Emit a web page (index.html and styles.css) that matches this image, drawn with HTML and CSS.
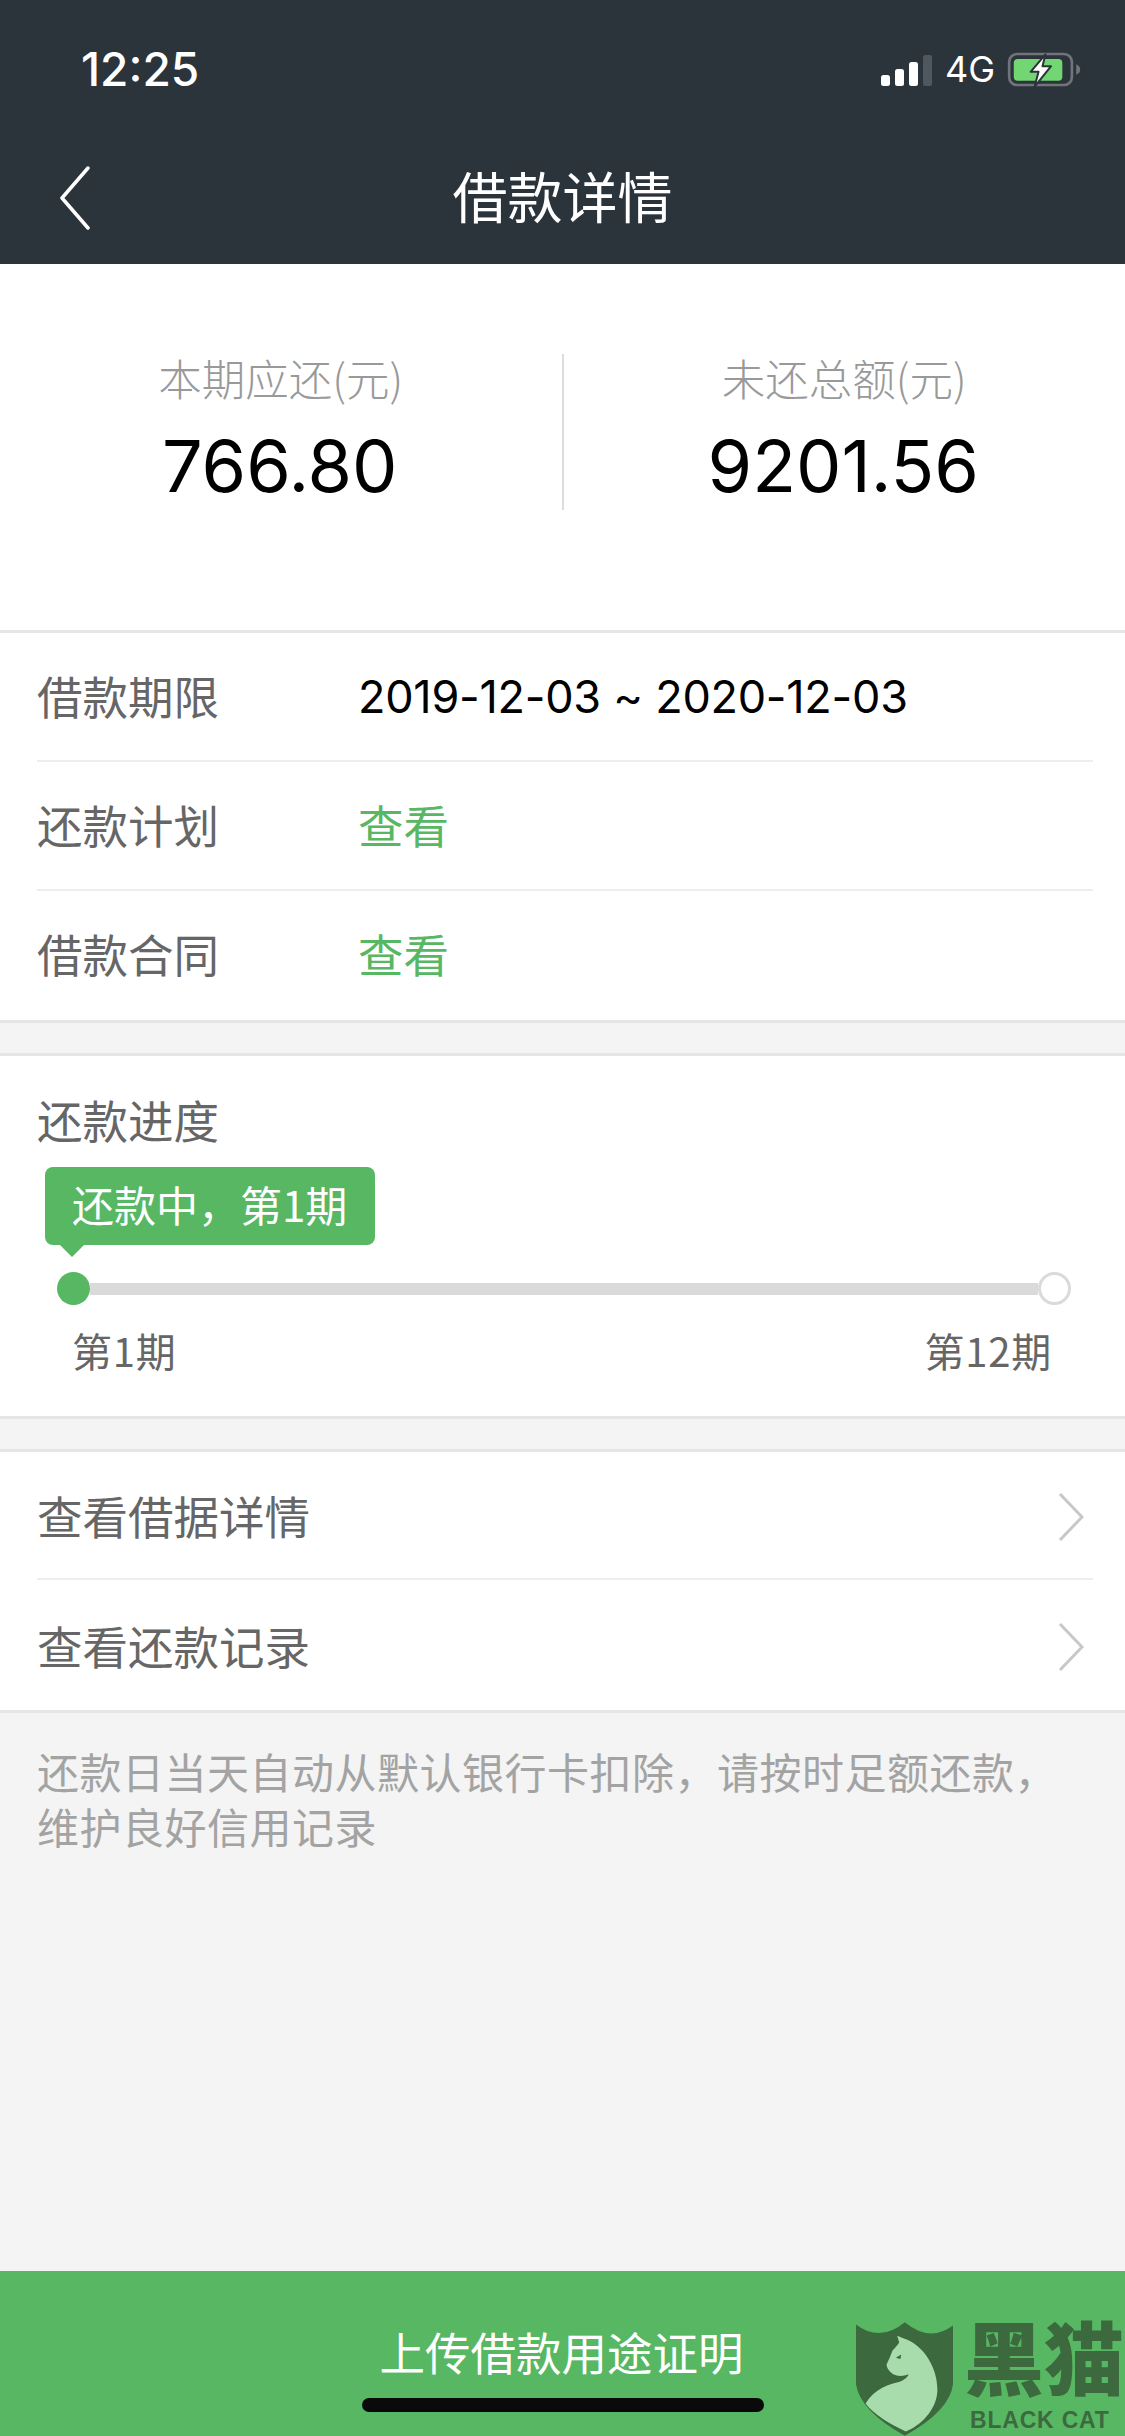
FILE: index.html
```html
<!DOCTYPE html>
<html lang="zh-CN">
<head>
<meta charset="utf-8">
<title>借款详情</title>
<link rel="stylesheet" href="styles.css">
</head>
<body>
<div class="app">
  <header class="header">
    <div class="status">
      <span class="time">12:25</span>
      <div class="status-right">
        <svg class="signal" viewBox="0 0 51 31" width="51" height="31">
          <rect x="0" y="20" width="9" height="11" rx="2.5" fill="#fff"/>
          <rect x="14" y="14" width="9" height="17" rx="2.5" fill="#fff"/>
          <rect x="28" y="7" width="9" height="24" rx="2.5" fill="#fff"/>
          <rect x="42" y="0" width="9" height="31" rx="2.5" fill="#50585f"/>
        </svg>
        <span class="net">4G</span>
        <svg class="battery" viewBox="620 60 230 112" width="77" height="37">
          <rect x="631" y="69" width="190" height="94" rx="24" fill="none" stroke="#6f757a" stroke-width="8"/>
          <rect x="645" y="84" width="147" height="66" rx="12" fill="#72d672"/>
          <path d="M834 100 Q846 105 846 116 Q846 127 834 132Z" fill="#6f757a"/>
          <path d="M741 70 L696 123 L720 123 L708 168 L758 106 L732 106Z" fill="#fff" stroke="#2b333b" stroke-width="6" stroke-linejoin="round"/>
        </svg>
      </div>
    </div>
    <nav class="nav">
      <svg class="back" viewBox="0 0 32 64" width="32" height="64">
        <path d="M29 2 L3 32 L29 62" fill="none" stroke="#fff" stroke-width="3.5" stroke-linecap="round" stroke-linejoin="round"/>
      </svg>
      <h1 class="title">借款详情</h1>
    </nav>
  </header>

  <section class="stats">
    <div class="stat">
      <div class="stat-label">本期应还(元)</div>
      <div class="stat-value">766.80</div>
    </div>
    <div class="stat-sep"></div>
    <div class="stat">
      <div class="stat-label">未还总额(元)</div>
      <div class="stat-value">9201.56</div>
    </div>
  </section>

  <section class="group group-info">
    <div class="row"><span class="row-label">借款期限</span><span class="row-date">2019-12-03 ~ 2020-12-03</span></div>
    <div class="row"><span class="row-label">还款计划</span><span class="row-link">查看</span></div>
    <div class="row row-last"><span class="row-label">借款合同</span><span class="row-link">查看</span></div>
  </section>

  <section class="group progress">
    <div class="progress-title">还款进度</div>
    <div class="tip">还款中&#xFF0C;第1期</div>
    <div class="track">
      <span class="dot dot-on"></span>
      <span class="bar"></span>
      <span class="dot dot-off"></span>
    </div>
    <div class="ends"><span>第1期</span><span>第12期</span></div>
  </section>

  <section class="group group-links">
    <div class="row link-row"><span class="row-label">查看借据详情</span>
      <svg class="chev" viewBox="0 0 26 48" width="26" height="48"><path d="M2 1 L24 24 L2 47" fill="none" stroke="#c8c8c8" stroke-width="3"/></svg>
    </div>
    <div class="row row-last link-row"><span class="row-label">查看还款记录</span>
      <svg class="chev" viewBox="0 0 26 48" width="26" height="48"><path d="M2 1 L24 24 L2 47" fill="none" stroke="#c8c8c8" stroke-width="3"/></svg>
    </div>
  </section>

  <p class="note">还款日当天自动从默认银行卡扣除&#xFF0C;请按时足额还款&#xFF0C;<br>维护良好信用记录</p>

  <footer class="footer">
    <span class="footer-text">上传借款用途证明</span>
    <div class="watermark">
      <svg class="shield" viewBox="228 183 292 342" width="97" height="114">
        <path d="M228 190 Q300 245 375 183 Q450 245 520 193 L520 370 Q510 450 375 525 Q240 450 228 370Z" fill="#3d693f"/>
        <path d="M352 224 L372 232 C430 250 475 320 473 390 C470 450 420 495 378 512 C330 490 280 460 257 428 C280 385 330 368 360 362 Q380 355 387 340 Q360 350 340 340 Q320 325 320 310 Q330 290 338 268 Q355 250 358 243Z" fill="#a9dcad"/>
        <path d="M348 290 L364 280 L362 294Z" fill="#3d693f"/>
      </svg>
      <div class="mark-text">
        <span class="mark-cn">黑猫</span>
        <span class="mark-en">BLACK CAT</span>
      </div>
    </div>
    <span class="home"></span>
  </footer>
</div>
</body>
</html>
```
FILE: styles.css
```css
* { box-sizing: border-box; }
html, body { margin: 0; padding: 0; }
body {
  width: 1125px;
  height: 2436px;
  overflow: hidden;
  font-family: "Inter", "Noto Sans CJK SC", sans-serif;
  background: #f4f4f4;
}
.app {
  height: 2436px;
  display: flex;
  flex-direction: column;
}
.header { height: 264px; background: #2b333b; color: #fff; flex: none; }
.status {
  height: 132px;
  padding: 6px 43px 0 81px;
  display: flex;
  align-items: center;
  justify-content: space-between;
}
.time { font-size: 46px; font-weight: 500; line-height: 50px; }
.status-right { display: flex; align-items: center; }
.net { font-size: 36px; line-height: 40px; margin: 0 10px 0 13px; }
.signal { display: block; margin-top: 2px; }
.battery { display: block; }
.nav {
  height: 132px;
  display: flex;
  align-items: center;
  justify-content: center;
  position: relative;
  padding-bottom: 8px;
}
.back { position: absolute; left: 59px; top: 34px; }
.title {
  margin: 0;
  font-family: "Noto Sans CJK SC", sans-serif;
  font-size: 55px;
  font-weight: 400;
  line-height: 70px;
}
.stats {
  height: 366px;
  background: #fff;
  display: flex;
  align-items: flex-start;
  flex: none;
}
.stat { flex: 1; text-align: center; padding-top: 86px; }
.stat-label {
  font-family: "Noto Sans CJK SC", sans-serif;
  font-size: 43.5px;
  line-height: 56px;
  color: #999;
  font-weight: 300;
}
.stat-value {
  font-size: 72px;
  line-height: 84px;
  color: #000;
  margin-top: 18px;
  padding-right: 2px;
}
.stat-sep { width: 2px; height: 156px; background: #ddd; margin-top: 90px; flex: none; }
.group {
  background: #fff;
  border-top: 3px solid #e5e5e5;
  border-bottom: 3px solid #e5e5e5;
  flex: none;
}
.group-info { height: 393px; }
.group-info .row { height: 129px; padding-bottom: 3px; }
.group-info .row-last { height: 129px; padding-bottom: 5px; border-bottom: 0; }
.progress { margin-top: 30px; height: 366px; padding: 0 37px 0 37px; position: relative; }
.group-links { margin-top: 30px; height: 264px; }
.group-links .row { height: 128px; }
.group-links .row-last { height: 130px; }
.row {
  margin: 0 32px 0 37px;
  display: flex;
  align-items: center;
  border-bottom: 2px solid #eee;
  font-family: "Noto Sans CJK SC", sans-serif;
}
.row-last { border-bottom: 0; }
.row-label { width: 321px; font-size: 45.5px; line-height: 60px; color: #666; }
.row-date { font-family: "Inter", sans-serif; font-size: 45px; line-height: 60px; color: #000; letter-spacing: -0.25px; padding-top: 3px; }
.row-link { font-size: 45.5px; line-height: 60px; color: #57b763; }
.link-row { justify-content: space-between; padding-right: 9px; }
.link-row .row-label { width: auto; margin-top: -1px; }
.chev { display: block; margin-top: 4px; }
.progress-title {
  font-family: "Noto Sans CJK SC", sans-serif;
  font-size: 45.5px;
  line-height: 60px;
  color: #666;
  padding-top: 33px;
  height: 111px;
}
.tip {
  font-family: "Noto Sans CJK SC", sans-serif;
  position: relative;
  display: inline-block;
  margin-left: 8px;
  height: 78px;
  width: 330px;
  line-height: 74px;
  background: #57b763;
  color: #fff;
  font-size: 42px;
  border-radius: 8px;
  padding-left: 27px;
  vertical-align: top;
}
.tip::after {
  content: "";
  position: absolute;
  left: 15px;
  top: 78px;
  border-left: 12px solid transparent;
  border-right: 12px solid transparent;
  border-top: 12px solid #57b763;
}
.track {
  display: flex;
  align-items: center;
  margin: 27px 17px 0 20px;
  height: 33px;
}
.bar { flex: 1; height: 12px; background: #dadada; }
.dot { flex: none; border-radius: 50%; }
.dot-on { width: 33px; height: 33px; background: #57b763; }
.dot-off { width: 33px; height: 33px; background: #fff; border: 3px solid #dadada; }
.ends {
  font-family: "Noto Sans CJK SC", sans-serif;
  display: flex;
  justify-content: space-between;
  font-size: 40px;
  line-height: 54px;
  letter-spacing: 0.8px;
  color: #666;
  margin: 18px 36px 0 35px;
}
.note {
  margin: 0;
  padding: 30px 37px 0;
  flex: 1;
  font-family: "Noto Sans CJK SC", sans-serif;
  font-size: 42px;
  line-height: 55px;
  letter-spacing: 0.5px;
  color: #a3a3a3;
  font-weight: 400;
}
.footer {
  height: 165px;
  flex: none;
  background: #57b763;
  position: relative;
  overflow: hidden;
  display: flex;
  justify-content: center;
  padding: 50px 2px 0 0;
}
.footer-text {
  font-family: "Noto Sans CJK SC", sans-serif;
  font-size: 45.5px;
  line-height: 60px;
  color: #fff;
}
.home {
  position: absolute;
  left: 362px;
  top: 127px;
  width: 402px;
  height: 14px;
  border-radius: 7px;
  background: #0a0a0a;
}
.watermark {
  position: absolute;
  left: 856px;
  top: 51px;
  display: flex;
  gap: 17px;
  color: #3d693f;
}
.shield { display: block; flex: none; }
.mark-text { display: flex; flex-direction: column; white-space: nowrap; }
.mark-cn {
  font-family: "Liberation Sans", "Noto Sans CJK SC", sans-serif;
  font-weight: 900;
  font-size: 80px;
  line-height: 80px;
  margin-left: -6px;
}
.mark-en {
  font-family: "Liberation Sans", sans-serif;
  font-weight: 700;
  font-size: 23px;
  line-height: 24px;
  letter-spacing: 0.8px;
  margin-top: 6px;
}
```
